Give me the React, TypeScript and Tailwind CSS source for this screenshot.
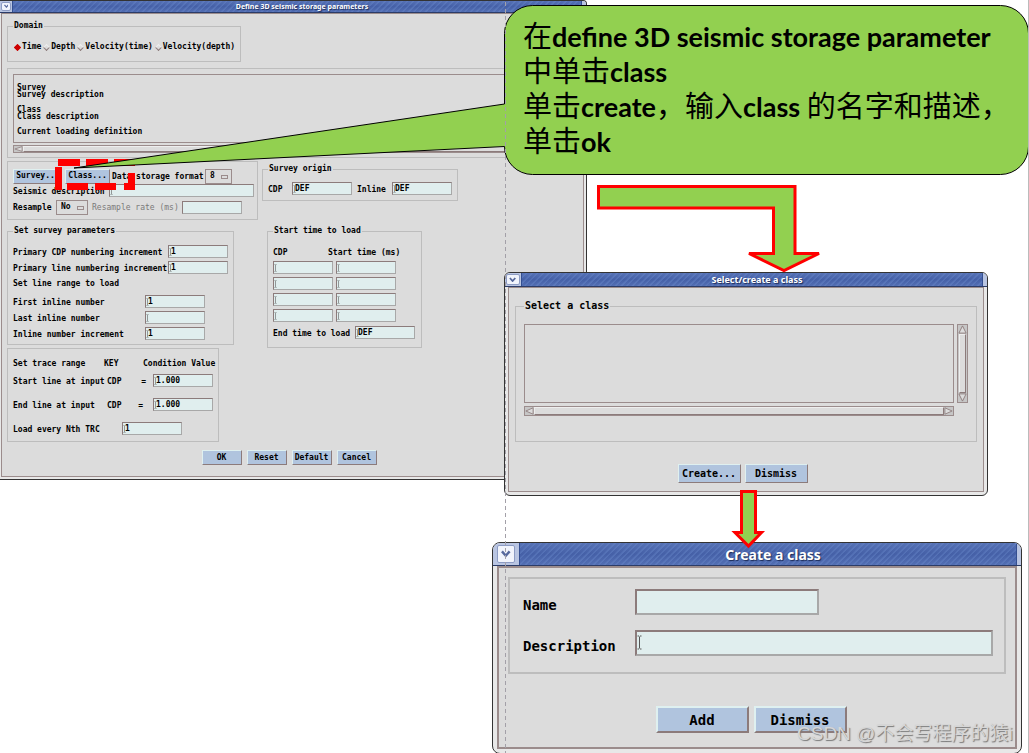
import React, { useId } from 'react';
import { clsx } from 'clsx';

type Size = 'sm' | 'md' | 'lg';

const BUTTON_SIZES: Record<Size, string> = {
  sm: 'h-[15px] text-[8px] border',
  md: 'h-[19px] w-[63px] text-[10px] border',
  lg: 'h-[27px] w-[93px] text-[14px] border-2',
};

const TITLE_SIZES: Record<Size, string> = {
  sm: 'h-[12px] text-[7px]',
  md: 'h-[14px] text-[9px]',
  lg: 'h-[23px] text-[14px]',
};

const MENU_BOX_SIZES: Record<Size, string> = {
  sm: 'w-[12px] p-px',
  md: 'w-[16px] p-px',
  lg: 'w-[26px] px-1 py-[2px]',
};

interface WindowProps {
  title: string;
  size: Size;
  className?: string;
  bodyClassName?: string;
  children: React.ReactNode;
}

function Window({ title, size, className, bodyClassName, children }: WindowProps) {
  return (
    <section className={clsx('absolute overflow-hidden border border-[#333] bg-[#e8e8e8]', className)}>
      <header className={clsx('flex border-b border-[#2b3c68] bg-[#b9c5e2]', TITLE_SIZES[size])}>
        <button type="button" aria-label="Window menu" className={clsx('flex', MENU_BOX_SIZES[size])}>
          <span className="flex h-full w-full items-center justify-center rounded-xs border border-[#8d9cc4] bg-[#f1f4fc]">
            <svg viewBox="0 0 10 8" className="h-3/5 w-3/5">
              <path d="M1 1.5 L5 6 L9 1.5" fill="none" stroke="#56689c" strokeWidth="2.6" />
            </svg>
          </span>
        </button>
        <h2 className="mr-1 flex flex-1 items-center justify-center border-x border-[#344f91] bg-[linear-gradient(#6f8ccb66,transparent_50%,#6f8ccb55),repeating-linear-gradient(135deg,#4560a7_0px,#4560a7_2px,#5370b5_3px,#5370b5_4px)] pt-px pl-[10px] font-['Noto_Sans'] font-bold text-white [text-shadow:1px_1px_1px_#1c2b57]">
          {title}
        </h2>
      </header>
      <div className={clsx('border border-[#9b8c8c] bg-[#dcdcdc]', bodyClassName)}>{children}</div>
    </section>
  );
}

function Group({ legend, className, children }: { legend: string; className?: string; children: React.ReactNode }) {
  return (
    <fieldset className={clsx('border border-[#bdbdbd]', className)}>
      <legend className="px-px">{legend}</legend>
      {children}
    </fieldset>
  );
}

function PushButton({ size, className, children }: { size: Size; className?: string; children: React.ReactNode }) {
  return (
    <button
      type="button"
      className={clsx(
        'flex shrink-0 items-center justify-center border-t-[#dff0f0] border-r-[#8c7b7b] border-b-[#8c7b7b] border-l-[#dff0f0] bg-[#b0c4de] font-bold',
        BUTTON_SIZES[size],
        className
      )}
    >
      {children}
    </button>
  );
}

function Caret({ className }: { className: string }) {
  return (
    <svg viewBox="0 0 5 14" className={clsx('pointer-events-none absolute', className)}>
      <path d="M0.5 0.5H2M3 0.5H4.5M2.5 1V13M0.5 13.5H2M3 13.5H4.5" fill="none" stroke="#555" strokeWidth="1" />
    </svg>
  );
}

interface FieldProps {
  id?: string;
  label?: string;
  value?: string;
  caret?: boolean;
  className?: string;
}

function Field({ id, label, value = '', caret = true, className = 'w-[60px]' }: FieldProps) {
  return (
    <span className={clsx('relative block h-[13px] shrink-0', className)}>
      <input
        id={id}
        aria-label={label}
        type="text"
        defaultValue={value}
        className="block h-full w-full border border-t-[#8c7b7b] border-r-[#a8a8a8] border-b-[#a8a8a8] border-l-[#8c7b7b] bg-[#e0eeee] pl-[2px] pb-px outline-none"
      />
      {caret && <Caret className="top-[3px] left-[1px] h-[8px] w-[3px]" />}
    </span>
  );
}

/** A label column of fixed width followed by its text box */
function FieldRow({ label, value, labelClass }: { label: string; value?: string; labelClass: string }) {
  const id = useId();
  return (
    <div className="flex h-[13px] items-center">
      <label htmlFor={id} className={clsx('shrink-0 pt-[3px] whitespace-nowrap', labelClass)}>
        {label}
      </label>
      <Field id={id} value={value} />
    </div>
  );
}

function TraceRow({ label, name, value, opClass }: { label: string; name: string; value: string; opClass: string }) {
  const id = useId();
  return (
    <div className="flex h-[13px] items-center">
      <label htmlFor={id} className="w-[94px] shrink-0 pt-[3px] whitespace-nowrap">
        {label}
      </label>
      <span className="w-[32px] pt-[3px]">{name}</span>
      <span className={clsx('w-[15px] pt-[3px]', opClass)}>=</span>
      <Field id={id} value={value} />
    </div>
  );
}

function OptionMenu({ id, value, className }: { id: string; value: string; className: string }) {
  return (
    <span className={clsx('relative block h-[15px] shrink-0', className)}>
      <select
        id={id}
        defaultValue={value}
        className="block h-full w-full appearance-none border border-[#9b8c8c] bg-[#dcdcdc] pl-1 outline-none"
      >
        <option>{value}</option>
      </select>
      <span className="pointer-events-none absolute top-[6px] right-[4px] h-[4px] w-[7px] border border-[#9b8c8c]" />
    </span>
  );
}

function Domain() {
  const options = ['Time', 'Depth', 'Velocity(time)', 'Velocity(depth)'];
  return (
    <Group legend="Domain" className="w-[233px] px-[5px] pt-[10px] pb-[8px]">
      <div className="flex h-[12px] items-center gap-[3px] pl-[2px]">
        {options.map((o, i) => (
          <label key={o} className="flex items-center gap-[2px]">
            <input
              type="radio"
              name="domain"
              defaultChecked={i === 0}
              className="h-[5px] w-[5px] rotate-45 appearance-none border border-t-[#eee] border-r-[#8c7b7b] border-b-[#8c7b7b] border-l-[#eee] bg-[#dcdcdc] checked:border-[#cd0000] checked:bg-[#cd0000]"
            />
            {o}
          </label>
        ))}
      </div>
    </Group>
  );
}

function HScroll({ className }: { className: string }) {
  return (
    <div className={clsx('flex items-stretch border border-[#9b8c8c] bg-[#c6c6c6]', className)}>
      <svg viewBox="0 0 10 10" preserveAspectRatio="none" className="h-full w-[9px]">
        <path d="M9 1 L1 5 L9 9 Z" fill="#dcdcdc" stroke="#8c7b7b" />
      </svg>
      <div className="flex-1 border border-t-[#eee] border-r-[#8c7b7b] border-b-[#8c7b7b] border-l-[#eee] bg-[#dcdcdc]" />
      <svg viewBox="0 0 10 10" preserveAspectRatio="none" className="h-full w-[9px]">
        <path d="M1 1 L9 5 L1 9 Z" fill="#dcdcdc" stroke="#8c7b7b" />
      </svg>
    </div>
  );
}

function VScroll() {
  return (
    <div className="flex h-[79px] w-[11px] flex-col border border-[#9b8c8c] bg-[#c6c6c6]">
      <svg viewBox="0 0 10 10" className="h-[9px] w-full">
        <path d="M1 9 L5 1 L9 9 Z" fill="#dcdcdc" stroke="#8c7b7b" />
      </svg>
      <div className="mx-px flex-1 border border-t-[#eee] border-r-[#8c7b7b] border-b-[#8c7b7b] border-l-[#eee] bg-[#dcdcdc]" />
      <svg viewBox="0 0 10 10" className="h-[9px] w-full">
        <path d="M1 1 L5 9 L9 1 Z" fill="#dcdcdc" stroke="#8c7b7b" />
      </svg>
    </div>
  );
}

function StorageWindow() {
  return (
    <Window
      title="Define 3D seismic storage parameters"
      size="sm"
      className="top-0 left-0 w-[587px] rounded-tr border-l-0 text-[8px] leading-[10px] font-bold"
      bodyClassName="mb-[2px] ml-px mr-[2px] px-[5px] pt-[7px] pb-[11px]"
    >
      <Domain />

      <div className="mt-[6px] border border-[#bdbdbd] px-[5px] pt-[5px] pb-[4px]">
        <div className="flex flex-col gap-[8px] border border-[#9b8c8c] px-[3px] pt-[9px] pb-[7px] leading-[7px]">
          <p>
            Survey
            <br />
            Survey description
          </p>
          <p>
            Class
            <br />
            Class description
          </p>
          <p>Current loading definition</p>
        </div>
        <HScroll className="mt-[2px] h-[8px]" />
      </div>

      <div className="mt-[3px] flex items-start gap-[4px]">
        <div className="w-[251px]">
          <div className="border border-[#bdbdbd] pt-[6px] pr-[3px] pb-[5px] pl-[5px]">
            <div className="flex h-[16px] items-center">
              <PushButton size="sm" className="w-[45px]">
                Survey..
              </PushButton>
              <PushButton size="sm" className="ml-[7px] w-[45px]">
                Class...
              </PushButton>
              <label htmlFor="format" className="ml-[2px] w-[93px] pt-[2px] whitespace-nowrap">
                Data storage format
              </label>
              <OptionMenu id="format" value="8" className="w-[27px]" />
            </div>
            <div className="flex h-[13px] items-center">
              <label htmlFor="seismic" className="w-[96px] pt-[3px] whitespace-nowrap">
                Seismic description
              </label>
              <Field id="seismic" className="flex-1" />
            </div>
            <div className="mt-[3px] flex h-[14px] items-center">
              <label htmlFor="resample" className="w-[43px] pt-[2px]">
                Resample
              </label>
              <OptionMenu id="resample" value="No" className="w-[32px]" />
              <label htmlFor="rate" className="ml-[4px] w-[90px] pt-[2px] font-normal text-[#7a7a7a]">
                Resample rate (ms)
              </label>
              <Field id="rate" caret={false} />
            </div>
          </div>

          <Group legend="Set survey parameters" className="mt-[6px] w-[225px] px-[5px] pt-[9px] pb-[4px]">
            <div className="flex flex-col gap-[3px]">
              <FieldRow label="Primary CDP numbering increment" value="1" labelClass="w-[155px]" />
              <FieldRow label="Primary line numbering increment" value="1" labelClass="w-[155px]" />
              <p className="mb-[2px] h-[13px] pt-[2px]">Set line range to load</p>
              <FieldRow label="First inline number" value="1" labelClass="w-[132px]" />
              <FieldRow label="Last inline number" labelClass="w-[132px]" />
              <FieldRow label="Inline number increment" value="1" labelClass="w-[132px]" />
            </div>
          </Group>

          <div className="mt-[3px] w-[212px] border border-[#bdbdbd] px-[5px] pt-[10px] pb-[6px]">
            <div className="flex">
              <span className="w-[91px] shrink-0">Set trace range</span>
              <span className="w-[39px] shrink-0">KEY</span>
              <span className="whitespace-nowrap">Condition Value</span>
            </div>
            <div className="mt-[5px] flex flex-col gap-[11px]">
              <TraceRow label="Start line at input" name="CDP" value="1.000" opClass="pl-[3px]" />
              <TraceRow label="End line at input" name="CDP" value="1.000" opClass="pl-0" />
              <FieldRow label="Load every Nth TRC" value="1" labelClass="w-[109px]" />
            </div>
          </div>
        </div>

        <div className="pt-[3px]">
          <Group legend="Survey origin" className="w-[194px] px-[5px] pt-[8px] pb-[5px]">
            <div className="flex items-center">
              <label htmlFor="origin-cdp" className="w-[24px] pt-[3px]">
                CDP
              </label>
              <Field id="origin-cdp" value="DEF" />
              <label htmlFor="origin-inline" className="ml-[5px] w-[35px] pt-[3px]">
                Inline
              </label>
              <Field id="origin-inline" value="DEF" />
            </div>
          </Group>

          <Group legend="Start time to load" className="mt-[25px] ml-[5px] w-[155px] px-[5px] pt-[12px] pb-[8px]">
            <table className="mb-px border-collapse">
              <thead>
                <tr>
                  <th className="p-0 pb-[3px] text-left">CDP</th>
                  <th className="p-0 pb-[3px] text-left">
                    <span className="-ml-2 whitespace-nowrap">Start time (ms)</span>
                  </th>
                </tr>
              </thead>
              <tbody>
                {[1, 2, 3, 4].map((n) => (
                  <tr key={n}>
                    <td className="p-0 pr-[3px] pb-[3px]">
                      <Field label={`CDP ${n}`} />
                    </td>
                    <td className="p-0 pb-[3px]">
                      <Field label={`Start time ${n}`} />
                    </td>
                  </tr>
                ))}
              </tbody>
            </table>
            <FieldRow label="End time to load" value="DEF" labelClass="w-[82px]" />
          </Group>
        </div>
      </div>

      <div className="mt-[8px] flex justify-center gap-[5px] pr-[7px]">
        <PushButton size="sm" className="w-[40px]">
          OK
        </PushButton>
        <PushButton size="sm" className="w-[40px]">
          Reset
        </PushButton>
        <PushButton size="sm" className="w-[40px]">
          Default
        </PushButton>
        <PushButton size="sm" className="w-[40px]">
          Cancel
        </PushButton>
      </div>
    </Window>
  );
}

function SelectClassWindow() {
  return (
    <Window
      title="Select/create a class"
      size="md"
      className="top-[272px] left-[504px] w-[484px] rounded-md text-[10px] leading-[12px] font-bold"
      bodyClassName="mx-[3px] mb-[3px] px-[6px] pt-[12px] pb-[8px]"
    >
      <Group legend="Select a class" className="px-[8px] pt-[12px] pb-[25px]">
        <div className="flex gap-[3px]">
          <div className="flex-1">
            <div role="listbox" aria-label="Classes" className="h-[79px] border border-[#9b8c8c]" />
            <HScroll className="mt-[3px] h-[10px]" />
          </div>
          <VScroll />
        </div>
      </Group>
      <div className="mt-[22px] flex justify-center gap-[4px] pr-[7px]">
        <PushButton size="md">Create...</PushButton>
        <PushButton size="md">Dismiss</PushButton>
      </div>
    </Window>
  );
}

function CreateClassWindow() {
  const inputClass =
    'h-[26px] border-2 border-t-[#8c7b7b] border-r-[#a8a8a8] border-b-[#a8a8a8] border-l-[#8c7b7b] bg-[#e0eeee] px-2 outline-none';
  return (
    <Window
      title="Create a class"
      size="lg"
      className="top-[542px] left-[492px] w-[530px] rounded-lg text-[14px] leading-[20px] font-bold"
      bodyClassName="mx-[4px] mb-[4px] border-2 px-[9px] pt-[9px] pb-[14px]"
    >
      <div className="flex flex-col gap-[15px] border-2 border-[#bdbdbd] pt-[10px] pr-[11px] pb-[16px] pl-[13px]">
        <div className="flex items-center">
          <label htmlFor="class-name" className="w-[112px] pt-[5px]">
            Name
          </label>
          <input id="class-name" type="text" className={clsx('w-[184px]', inputClass)} />
        </div>
        <div className="flex items-center">
          <label htmlFor="class-description" className="w-[112px] pt-[5px]">
            Description
          </label>
          <span className="relative flex flex-1">
            <input id="class-description" type="text" className={clsx('w-full', inputClass)} />
            <Caret className="top-[5px] left-[2px] h-[15px] w-[5px]" />
          </span>
        </div>
      </div>
      <div className="mt-[32px] flex justify-center gap-[5px] pr-[12px]">
        <PushButton size="lg">Add</PushButton>
        <PushButton size="lg">Dismiss</PushButton>
      </div>
    </Window>
  );
}

/** Marker, callout and arrows drawn over the windows */
function Annotations() {
  return (
    <svg width="1029" height="753" className="pointer-events-none absolute top-0 left-0">
      <path
        d="M58 159h22v7H58z M86 159h22v7H86z M114 159h21v7H114z M55 167h7v23H55z M67 183h21v7H67z M95 183h21v7H95z M128 173h7v17H124v-7h4z"
        fill="#ff0000"
      />
      <path
        d="M532.5 5.5H1000.5A28 28 0 0 1 1028.5 33.5V146.5A28 28 0 0 1 1000.5 174.5H532.5A28 28 0 0 1 504.5 146.5L74 168L504.5 104V33.5A28 28 0 0 1 532.5 5.5Z"
        fill="#92d050"
        stroke="#000"
      />
      <path
        d="M598.5 186.5H795V253.5H819L784 270.5L749 253.5H773.5V208H598.5Z"
        fill="#92d050"
        stroke="#ff0000"
        strokeWidth="3"
      />
      <path
        d="M741.5 491.5H755.5V532.5H761.5L748.5 546L735 532.5H741.5Z"
        fill="#92d050"
        stroke="#ff0000"
        strokeWidth="3"
      />
      <path d="M505.5 2V753" stroke="#a3a0a8" strokeDasharray="4 3" />
    </svg>
  );
}

function Zh({ children }: { children: React.ReactNode }) {
  return <span className="font-['Noto_Sans_CJK_SC',sans-serif] text-[29px] leading-[20px] font-normal">{children}</span>;
}

export default function App() {
  return (
    <main className="relative min-h-screen overflow-hidden border-r border-[#bbb] bg-white font-['DejaVu_Sans_Mono','Liberation_Mono',monospace] text-black">
      <StorageWindow />
      <SelectClassWindow />
      <CreateClassWindow />
      <Annotations />
      <p className="absolute top-[19px] left-[523px] font-['Lato','Noto_Sans_CJK_SC',sans-serif] text-[27px] leading-[35px] font-bold whitespace-nowrap">
        <Zh>在</Zh>define 3D seismic storage parameter
        <br />
        <Zh>中单击</Zh>class
        <br />
        <Zh>单击</Zh>create<Zh>，输入</Zh>class <Zh>的名字和描述，</Zh>
        <br />
        <Zh>单击</Zh>ok
      </p>
      <p className="absolute top-[721px] left-[797px] font-['Liberation_Sans','Noto_Sans_CJK_SC',sans-serif] text-[19px] leading-[26px] whitespace-nowrap text-[#d6d6d6] [text-shadow:1px_1px_1px_#777]">
        CSDN @不会写程序的猿i
      </p>
    </main>
  );
}
